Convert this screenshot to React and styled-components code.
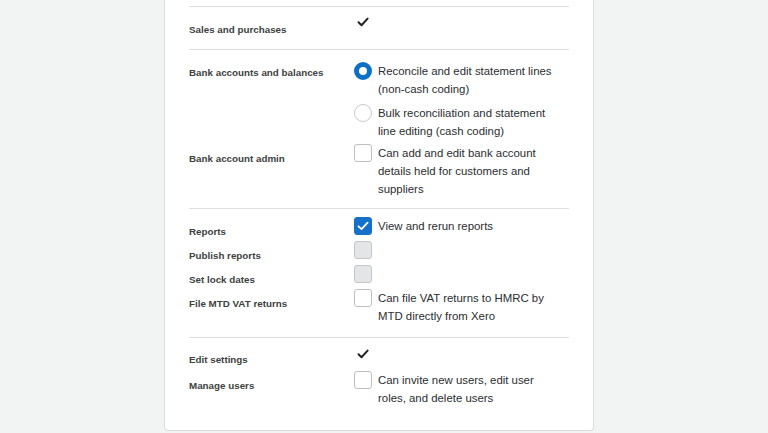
import React from 'react'
import styled, { createGlobalStyle } from 'styled-components'

const GlobalStyle = createGlobalStyle`
  html, body {
    margin: 0;
    padding: 0;
    background: #f2f3f3;
    font-family: "Liberation Sans", Arial, sans-serif;
  }
`

const Page = styled.div`
  display: flex;
  justify-content: center;
  padding-right: 10px;
  height: 433px;
  overflow: hidden;
`

const Card = styled.div`
  box-sizing: border-box;
  width: 430px;
  background: #fff;
  border: 1px solid #dadcdd;
  border-top: none;
  border-radius: 0 0 4px 4px;
  padding: 6px 24px 23px;
  align-self: flex-start;
`

const Section = styled.div`
  display: flex;
  flex-direction: column;
  gap: ${p => p.$gap || 0}px;
  padding: ${p => p.$top}px 0 ${p => p.$bottom}px;
  border-top: 1px solid #dfe0e1;
`

const Row = styled.div`
  display: grid;
  grid-template-columns: 165px 1fr;
  min-height: 24px;
`

const Label = styled.div`
  padding-top: ${p => (p.$offset ?? 6)}px;
  font-size: 9.8px;
  font-weight: bold;
  line-height: 18px;
  color: #3d3f41;
`

const Options = styled.div`
  display: flex;
  flex-direction: column;
  gap: 6px;
`

const Option = styled.div`
  display: flex;
  align-items: flex-start;
  gap: 6px;
`

const Text = styled.div`
  font-size: 11.4px;
  line-height: 18px;
  color: #2b2d2f;
  max-width: 185px;
`

const Box = styled.span`
  box-sizing: border-box;
  flex: none;
  width: 18px;
  height: 18px;
  border-radius: 3px;
  display: flex;
  align-items: center;
  justify-content: center;
  border: 1px solid ${p => (p.$checked ? '#1470c8' : p.$disabled ? '#c4c7ca' : '#bcc0c3')};
  background: ${p => (p.$checked ? '#1470c8' : p.$disabled ? '#e3e5e7' : '#fff')};
`

const Radio = styled.span`
  box-sizing: border-box;
  flex: none;
  width: 18px;
  height: 18px;
  border-radius: 50%;
  border: ${p => (p.$checked ? '5px solid #0b6fc4' : '1px solid #c6c9cc')};
  background: #fff;
`

const Tick = styled.span`
  flex: none;
  width: 18px;
  height: 18px;
  display: flex;
  align-items: center;
  justify-content: center;
`

const CheckMark = ({ color = '#1f2123', width = 2 }) => (
  <svg width="14" height="14" viewBox="0 0 14 14">
    <path d="M2.5 7.3 L5.5 10.2 L11.6 3.6" fill="none" stroke={color} strokeWidth={width} strokeLinecap="round" strokeLinejoin="round" />
  </svg>
)

const Checkbox = ({ checked, disabled }) => (
  <Box $checked={checked} $disabled={disabled}>
    {checked && <CheckMark color="#fff" width={1.8} />}
  </Box>
)

const App = () => (
  <>
    <GlobalStyle />
    <Page>
      <Card>
        <Section $top={6} $bottom={10}>
          <Row>
            <Label $offset={8}>Sales and purchases</Label>
            <Option>
              <Tick><CheckMark /></Tick>
            </Option>
          </Row>
        </Section>

        <Section $top={12} $bottom={10} $gap={4}>
          <Row>
            <Label $offset={2}>Bank accounts and balances</Label>
            <Options>
              <Option>
                <Radio $checked />
                <Text>Reconcile and edit statement lines (non-cash coding)</Text>
              </Option>
              <Option>
                <Radio />
                <Text>Bulk reconciliation and statement line editing (cash coding)</Text>
              </Option>
            </Options>
          </Row>
          <Row>
            <Label>Bank account admin</Label>
            <Option>
              <Checkbox />
              <Text>Can add and edit bank account details held for customers and suppliers</Text>
            </Option>
          </Row>
        </Section>

        <Section $top={8} $bottom={12}>
          <Row>
            <Label>Reports</Label>
            <Option>
              <Checkbox checked />
              <Text>View and rerun reports</Text>
            </Option>
          </Row>
          <Row>
            <Label>Publish reports</Label>
            <Option>
              <Checkbox disabled />
            </Option>
          </Row>
          <Row>
            <Label>Set lock dates</Label>
            <Option>
              <Checkbox disabled />
            </Option>
          </Row>
          <Row>
            <Label>File MTD VAT returns</Label>
            <Option>
              <Checkbox />
              <Text>Can file VAT returns to HMRC by MTD directly from Xero</Text>
            </Option>
          </Row>
        </Section>

        <Section $top={7} $bottom={0} $gap={2}>
          <Row>
            <Label>Edit settings</Label>
            <Option>
              <Tick><CheckMark /></Tick>
            </Option>
          </Row>
          <Row>
            <Label>Manage users</Label>
            <Option>
              <Checkbox />
              <Text>Can invite new users, edit user roles, and delete users</Text>
            </Option>
          </Row>
        </Section>
      </Card>
    </Page>
  </>
)

export default App
